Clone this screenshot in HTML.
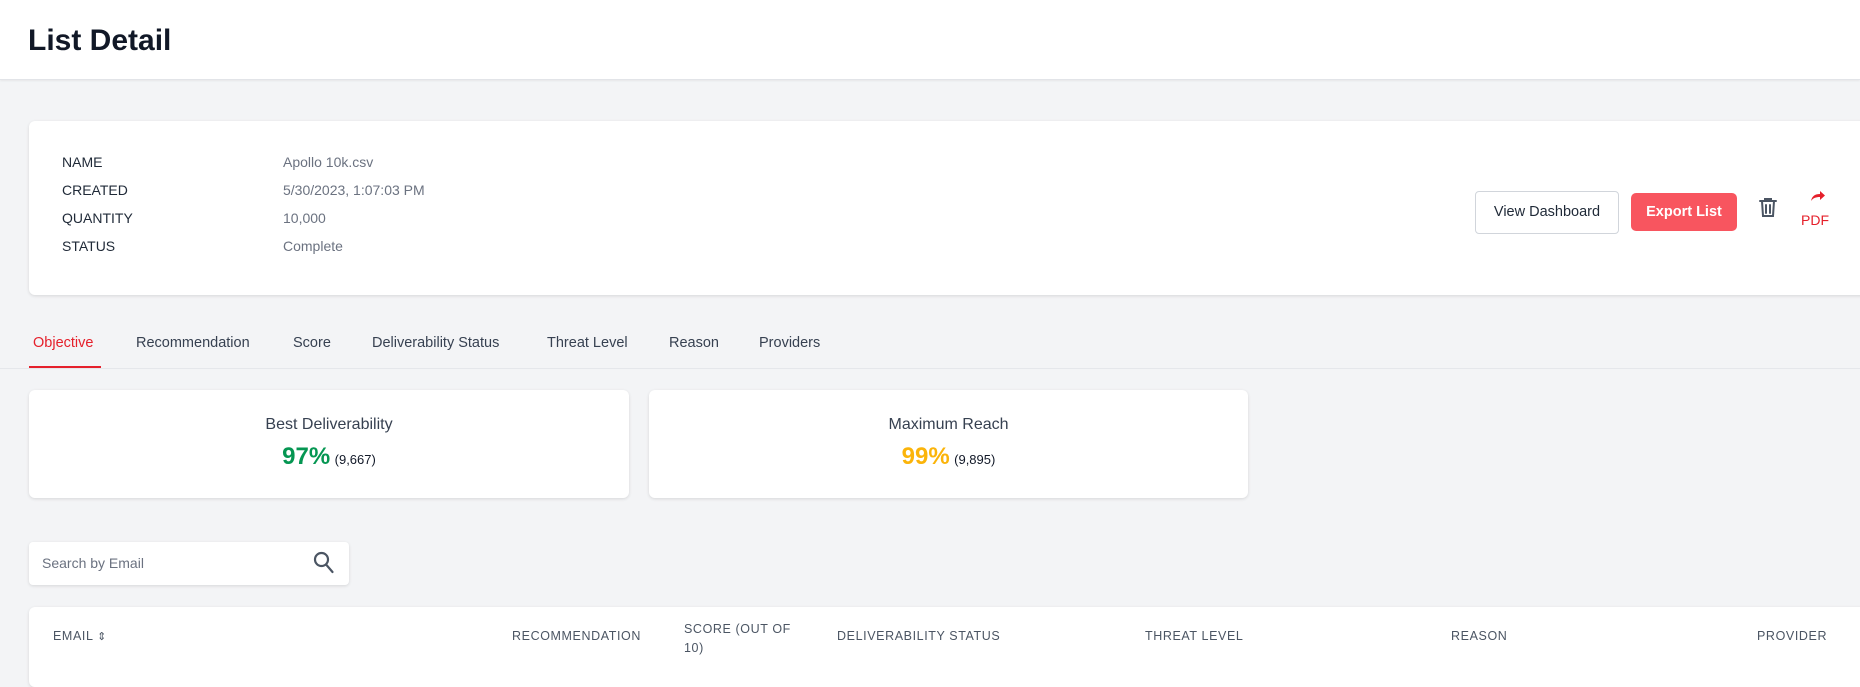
<!DOCTYPE html>
<html><head><meta charset="utf-8"><style>
*{margin:0;padding:0;box-sizing:border-box}
body{width:1860px;height:658px;overflow:hidden;background:#f3f4f6;font-family:"Liberation Sans",sans-serif;color:#111827;position:relative}
.a{position:absolute;white-space:nowrap}
.hdr{left:0;top:0;width:1860px;height:80px;background:#fff;border-bottom:1px solid #e2e4e8;box-shadow:0 1px 2px rgba(0,0,0,.06)}
.card{background:#fff;border-radius:6px;box-shadow:0 1px 3px rgba(0,0,0,.12)}
.lbl{font-size:14px;color:#1f2937}
.val{font-size:14px;color:#6b7280}
.tab{font-size:14.5px;color:#374151;top:335px}
.th{font-size:12.5px;color:#4b5563;letter-spacing:.6px}
</style></head><body>
<div class="a hdr"></div>
<div class="a" style="left:28px;top:24px;font-size:30px;font-weight:bold;color:#111827">List Detail</div>

<div class="a card" style="left:29px;top:121px;width:1850px;height:174px"></div>
<div class="a lbl" style="left:62px;top:154px">NAME</div>
<div class="a lbl" style="left:62px;top:182px">CREATED</div>
<div class="a lbl" style="left:62px;top:210px">QUANTITY</div>
<div class="a lbl" style="left:62px;top:238px">STATUS</div>
<div class="a val" style="left:283px;top:154px">Apollo 10k.csv</div>
<div class="a val" style="left:283px;top:182px">5/30/2023, 1:07:03 PM</div>
<div class="a val" style="left:283px;top:210px">10,000</div>
<div class="a val" style="left:283px;top:238px">Complete</div>

<div class="a" style="left:1475px;top:191px;width:144px;height:43px;border:1px solid #d1d5db;border-radius:4px;background:#fff;font-size:14.5px;color:#1f2937;text-align:center;line-height:41px">View Dashboard</div>
<div class="a" style="left:1631px;top:193px;width:106px;height:38px;border-radius:5px;background:#f8555f;font-size:14.5px;color:#fff;font-weight:bold;text-align:center;line-height:38px">Export List</div>
<svg class="a" style="left:1759px;top:197px" width="18" height="21" viewBox="0 0 18 21" fill="none" stroke="#4b5563" stroke-width="2" stroke-linecap="round"><path d="M1 4h16M6 4V2h6v2M3 4l1 15h10l1-15M7 8v8M11 8v8"/></svg>
<svg class="a" style="left:1810px;top:190px" width="16" height="12" viewBox="0 0 16 12"><path d="M1 11C2 6 5 4 10 4V1l5 4.5-5 4.5V7C6 7 3 8 1 11z" fill="#e5202b"/></svg>
<div class="a" style="left:1801px;top:212px;font-size:14px;color:#e5202b">PDF</div>

<div class="a" style="left:0;top:368px;width:1860px;height:1px;background:#e5e7eb"></div>
<div class="a" style="left:29px;top:366px;width:72px;height:2px;background:#e5202b"></div>
<div class="a tab" style="left:33px;color:#e5202b">Objective</div>
<div class="a tab" style="left:136px">Recommendation</div>
<div class="a tab" style="left:293px">Score</div>
<div class="a tab" style="left:372px">Deliverability Status</div>
<div class="a tab" style="left:547px">Threat Level</div>
<div class="a tab" style="left:669px">Reason</div>
<div class="a tab" style="left:759px">Providers</div>

<div class="a card" style="left:29px;top:390px;width:600px;height:108px"></div>
<div class="a" style="left:29px;top:416px;width:600px;text-align:center;font-size:16px;color:#374151">Best Deliverability</div>
<div class="a" style="left:29px;top:443px;width:600px;text-align:center"><span style="font-size:24px;color:#059652;font-weight:bold">97%</span> <span style="font-size:13px;color:#111827">(9,667)</span></div>
<div class="a card" style="left:649px;top:390px;width:599px;height:108px"></div>
<div class="a" style="left:649px;top:416px;width:599px;text-align:center;font-size:16px;color:#374151">Maximum Reach</div>
<div class="a" style="left:649px;top:443px;width:599px;text-align:center"><span style="font-size:24px;color:#fbb40a;font-weight:bold">99%</span> <span style="font-size:13px;color:#111827">(9,895)</span></div>

<div class="a card" style="left:29px;top:542px;width:320px;height:43px;border-radius:4px"></div>
<div class="a" style="left:42px;top:555px;font-size:14px;color:#6b7280">Search by Email</div>
<svg class="a" style="left:313px;top:551px" width="22" height="24" viewBox="0 0 22 24" fill="none" stroke="#4b5563" stroke-width="2.2" stroke-linecap="round"><circle cx="8.5" cy="8.5" r="6.5"/><path d="M13.5 14l6 7"/></svg>

<div class="a card" style="left:29px;top:607px;width:1850px;height:80px"></div>
<div class="a th" style="left:53px;top:629px">EMAIL <span style="font-size:11px">⇕</span></div>
<div class="a th" style="left:512px;top:629px">RECOMMENDATION</div>
<div class="a th" style="left:684px;top:620px;line-height:19px">SCORE (OUT OF<br>10)</div>
<div class="a th" style="left:837px;top:629px">DELIVERABILITY STATUS</div>
<div class="a th" style="left:1145px;top:629px">THREAT LEVEL</div>
<div class="a th" style="left:1451px;top:629px">REASON</div>
<div class="a th" style="left:1757px;top:629px">PROVIDER</div>
</body></html>
